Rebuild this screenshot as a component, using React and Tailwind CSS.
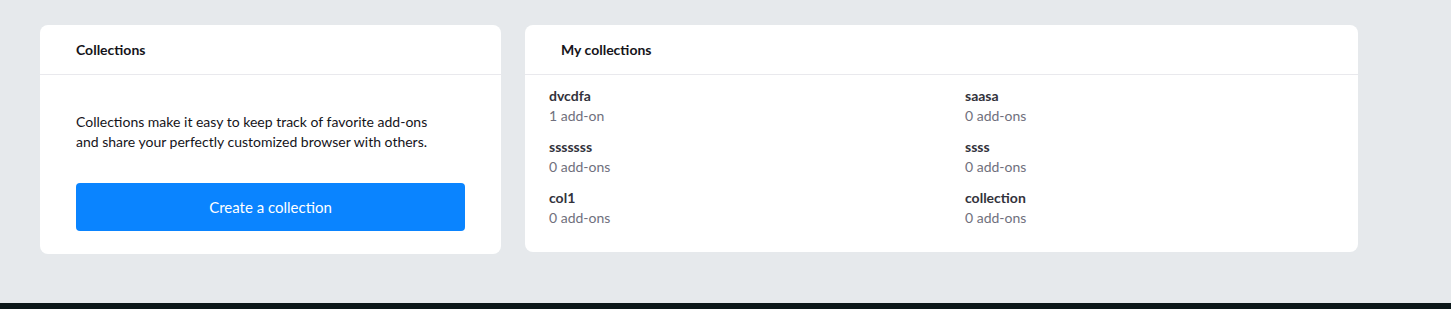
const collections = [
  { name: "dvcdfa", count: "1 add-on" },
  { name: "saasa", count: "0 add-ons" },
  { name: "sssssss", count: "0 add-ons" },
  { name: "ssss", count: "0 add-ons" },
  { name: "col1", count: "0 add-ons" },
  { name: "collection", count: "0 add-ons" },
];

export default function App() {
  return (
    <div className="w-[1451px] h-[309px] bg-[#e6e9ec] flex flex-col font-['Lato',sans-serif] text-[#15141a]">
      <div className="flex-1 flex items-start gap-[24px] pl-[40px] pt-[25px]">
        {/* Info card */}
        <section className="w-[461px] bg-white rounded-lg">
          <header className="h-[50px] border-b border-[#e9e9ed] flex items-center px-[36px]">
            <h2 className="text-[14px] font-bold">Collections</h2>
          </header>
          <div className="px-[36px] pt-[37px] pb-[23px]">
            <p className="max-w-[370px] text-[14px] leading-[20px]">
              Collections make it easy to keep track of favorite add-ons and share your perfectly customized browser with others.
            </p>
            <button
              type="button"
              className="mt-[31px] w-full h-[48px] rounded bg-[#0a84ff] text-white text-[15px]"
            >
              Create a collection
            </button>
          </div>
        </section>

        {/* My collections */}
        <section className="w-[833px] bg-white rounded-lg">
          <header className="h-[50px] border-b border-[#e9e9ed] flex items-center px-[36px]">
            <h2 className="text-[14px] font-bold">My collections</h2>
          </header>
          <ul className="grid grid-cols-[416px_1fr] px-[24px] pt-[11px] pb-[13px]">
            {collections.map((c) => (
              <li key={c.name} className="h-[51px] flex flex-col">
                <span className="text-[14px] leading-[20px] font-bold text-[#32323b]">{c.name}</span>
                <span className="text-[14px] leading-[20px] text-[#70707d]">{c.count}</span>
              </li>
            ))}
          </ul>
        </section>
      </div>
      <footer className="h-[6px] bg-[#0c1719]" />
    </div>
  );
}
